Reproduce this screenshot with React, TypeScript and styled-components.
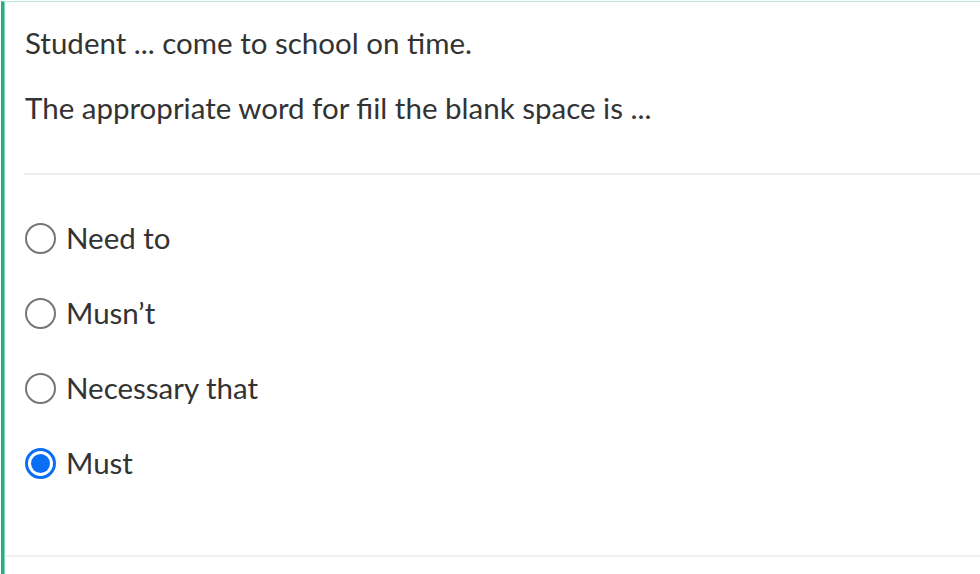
import styled, { createGlobalStyle } from 'styled-components';

const GlobalStyle = createGlobalStyle`
	html, body {
		margin: 0;
		padding: 0;
		background: #ffffff;
	}
	body {
		font-family: Lato, "Liberation Sans", sans-serif;
		color: #333333;
	}
`;

const Card = styled.div`
	box-sizing: border-box;
	width: 979px;
	height: 573px;
	margin: 1px 0 0 1px;
	border-top: 1px solid #b3ebd5;
	border-left: 3px solid #22b37c;
	box-shadow: inset 1px 0 0 #7fd6b3;
	display: flex;
	flex-direction: column;
	overflow: hidden;
`;

const Question = styled.div`
	margin-left: 20px;
	padding: 21px 0 45px 1px;
	border-bottom: 2px solid #eeeeee;
`;

const Line = styled.p`
	margin: 0;
	font-size: 29.5px;
	line-height: 40px;
	& + & {
		margin-top: 25px;
	}
`;

const Options = styled.div`
	display: flex;
	flex-direction: column;
	gap: 35px;
	margin-left: 2px;
	padding: 43px 0 72px 19px;
	border-bottom: 2px solid #f0f0f0;
`;

const Option = styled.label`
	display: flex;
	align-items: center;
	gap: 10px;
	font-size: 29.5px;
	line-height: 40px;
	color: #333333;
`;

const Radio = styled.span<{ $checked?: boolean }>`
	box-sizing: border-box;
	width: 31px;
	height: 31px;
	border-radius: 50%;
	border: ${(p) => (p.$checked ? '3px solid #0b6ff5' : '2px solid #767676')};
	display: flex;
	align-items: center;
	justify-content: center;
	flex-shrink: 0;
	&::after {
		content: '';
		display: ${(p) => (p.$checked ? 'block' : 'none')};
		width: 19px;
		height: 19px;
		border-radius: 50%;
		background: #0b6ff5;
	}
`;

const options = [
	{ text: 'Need to', checked: false },
	{ text: 'Musn’t', checked: false },
	{ text: 'Necessary that', checked: false },
	{ text: 'Must', checked: true },
];

const App = () => {
	return (
		<>
			<GlobalStyle />
			<Card>
				<Question>
					<Line>Student ... come to school on time.</Line>
					<Line>The appropriate word for fiil the blank space is ...</Line>
				</Question>
				<Options>
					{options.map((o) => (
						<Option key={o.text}>
							<Radio $checked={o.checked} />
							{o.text}
						</Option>
					))}
				</Options>
			</Card>
		</>
	);
};

export default App;
